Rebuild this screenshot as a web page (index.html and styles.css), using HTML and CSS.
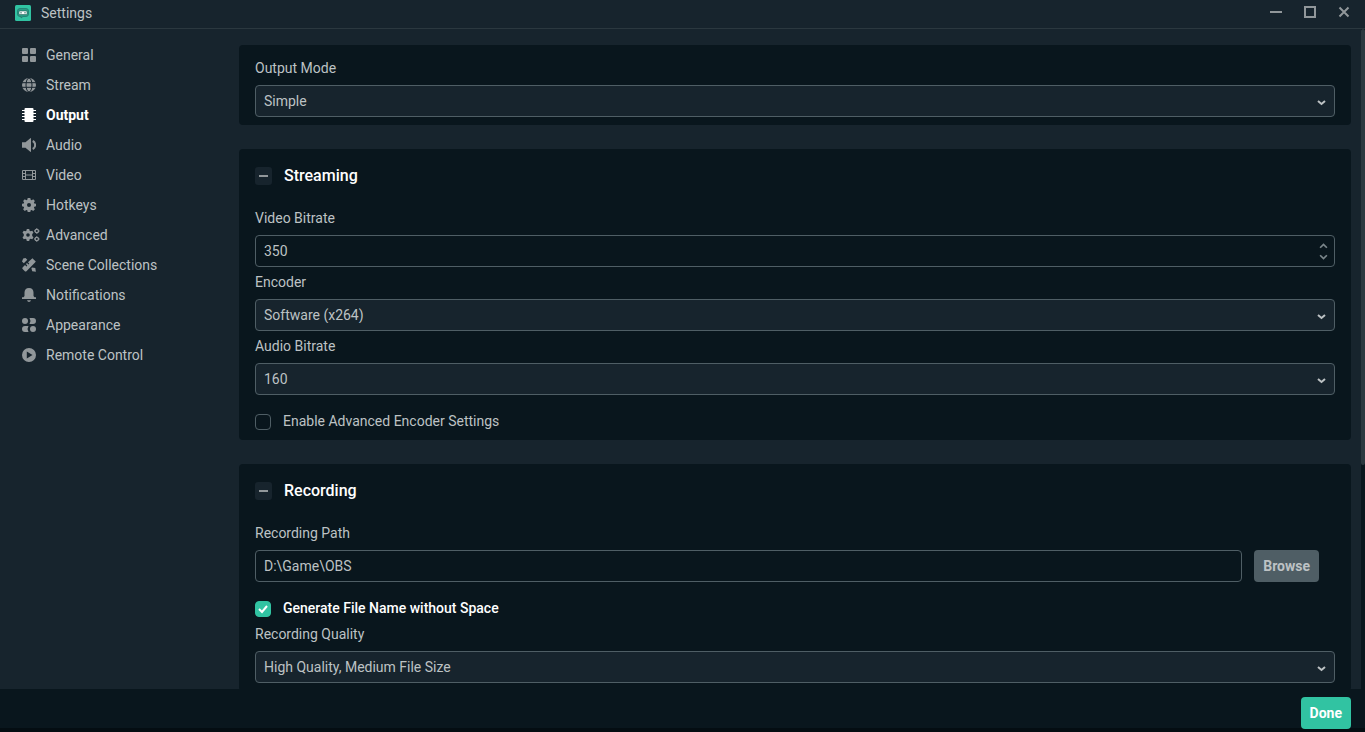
FILE: index.html
```
<!DOCTYPE html>
<html lang="en">
<head>
    <meta charset="UTF-8">
    <title>Settings</title>
    <link rel="stylesheet" href="styles.css">
</head>
<body>
<div class="window">
    <header class="titlebar">
        <svg class="logo" viewBox="0 0 16 16">
            <rect width="16" height="16" rx="1.5" fill="#31c3a2"/>
            <path d="M5 3.5h6a2.5 2.5 0 0 1 2.5 2.5v3a2.5 2.5 0 0 1-2.5 2.5H8l-2 1.5v-1.5H5A2.5 2.5 0 0 1 2.5 9V6A2.5 2.500 0 0 1 5 3.500z" fill="#2a9a84" stroke="#24786e" stroke-width=".8"/>
            <rect x="4" y="6" width="8" height="3.500" rx=".8" fill="#fff" stroke="#24665e" stroke-width=".6"/>
            <path d="M6 7v1.500M10 7v1.500" stroke="#24665e" stroke-width="1"/>
        </svg>
        <h1 class="title">Settings</h1>
        <div class="window-buttons">
            <button type="button" aria-label="Minimize"><svg viewBox="0 0 14 14"><path d="M1 7h12" stroke-width="2"/></svg></button>
            <button type="button" aria-label="Maximize"><svg viewBox="0 0 14 14"><path d="M2 2h10v10H2z" stroke-width="2"/></svg></button>
            <button type="button" aria-label="Close"><svg viewBox="0 0 14 14"><path d="M2.5 2.5l9 9M11.5 2.5l-9 9" stroke-width="2"/></svg></button>
        </div>
    </header>

    <div class="main">
        <nav class="nav">
            <a href="#" class="nav-item">
                <svg viewBox="0 0 14 14"><rect width="6" height="6" rx="1"/><rect x="8" width="6" height="6" rx="1"/><rect y="8" width="6" height="6" rx="1"/><rect x="8" y="8" width="6" height="6" rx="1"/></svg>
                General
            </a>
            <a href="#" class="nav-item">
                <svg viewBox="0 0 14 14"><circle cx="7" cy="7" r="7"/><g class="cut"><path d="M0 4.7h14M0 9.3h14"/><ellipse cx="7" cy="7" rx="3" ry="7"/></g></svg>
                Stream
            </a>
            <a href="#" class="nav-item active">
                <svg viewBox="0 0 14 14"><rect x="2.5" width="9" height="14" rx="1"/><path class="line" d="M0 2.5h14M0 5.5h14M0 8.5h14M0 11.5h14"/></svg>
                Output
            </a>
            <a href="#" class="nav-item">
                <svg viewBox="0 0 14 14"><path d="M0 4.3h3.5L8.300.2q.7-.4.7.6v12.400q0 1-.7.600L3.500 9.700H0z"/><path class="line thick" d="M10.700 3c3.300 1.500 3.300 6.500 0 8"/></svg>
                Audio
            </a>
            <a href="#" class="nav-item">
                <svg viewBox="0 0 14 14"><path class="line" d="M.5 2.5h13v9H.5zM3.5 2v10M10.5 2v10M3.5 7h7M0 5.500h3M0 8.500h3M11 5.500h3M11 8.500h3"/></svg>
                Video
            </a>
            <a href="#" class="nav-item">
                <svg viewBox="0 0 14 14"><path fill-rule="evenodd" d="M5.700 0h2.600l.4 1.800 1 .4 1.500-1 1.700 1.700-1 1.500.4 1 1.700.4v2.500l-1.700.4-.4 1 1 1.500-1.700 1.700-1.500-1-1 .4L8.300 14H5.700l-.4-1.700-1-.4-1.500 1-1.700-1.700 1-1.500-.4-1L0 8.300V5.800l1.700-.4.4-1-1-1.500 1.700-1.700 1.500 1 1-.4zM7 5a2 2 0 1 0 0 4 2 2 0 0 0 0-4z"/></svg>
                Hotkeys
            </a>
            <a href="#" class="nav-item">
                <svg class="wide" viewBox="0 0 18 14"><path fill-rule="evenodd" d="M4.800 1h2.400l.4 1.800 1 .5 1.700-.6L11.500 4.800l-1.300 1.300v1.800l1.300 1.300-1.200 2.100-1.700-.6-1 .5-.4 1.800H4.800l-.4-1.800-1-.5-1.700.6L.5 9.200l1.300-1.300V6.100L.5 4.800l1.200-2.100 1.700.6 1-.5zM6 5.200a1.800 1.800 0 1 0 0 3.600 1.800 1.800 0 0 0 0-3.600z"/><g class="line"><circle cx="14.800" cy="3" r="1.700" stroke-width="1.300"/><circle cx="14.800" cy="11" r="1.700" stroke-width="1.300"/><path d="M14.800.200v1M14.800 4.800v1M12 3h1M16.600 3h1M14.800 8.200v1M14.800 12.800v1M12 11h1M16.600 11h1"/></g></svg>
                Advanced
            </a>
            <a href="#" class="nav-item">
                <svg viewBox="0 0 14 14"><path d="M9.300 1.200 10.500.2l1.400 1.500L13.800 3.500l-1 1.300L4.700 13q-.8.700-1.600.5L.4 10.800Q0 10 .8 9.200L3 7l1.500 1.500.8-.8L4 6l1-1 1.500 1.500.8-.8L6 4.300z"/><path d="M1.200.5 3.500 0 5.300 1.800 1.800 5.300 0 3.500zM10 9.500l3.300.6.6 3.700-3.700-.5-.8-3z"/></svg>
                Scene Collections
            </a>
            <a href="#" class="nav-item">
                <svg viewBox="0 0 14 14"><path d="M7 0c3 0 4.500 2 4.500 4.500V8l1 1.200H14V11H0V9.200h1.500l1-1.200V4.500C2.500 2 4 0 7 0zM5 12.300h4Q8.500 14 7 14t-2-1.700z"/></svg>
                Notifications
            </a>
            <a href="#" class="nav-item">
                <svg viewBox="0 0 14 14"><circle cx="3" cy="3" r="3"/><path d="M7.500 0H11a3 3 0 0 1 0 6H7.500L8.500 3zM3 8h3.500l-1 3 1 3H3a3 3 0 0 1 0-6z"/><circle cx="11" cy="11" r="3"/></svg>
                Appearance
            </a>
            <a href="#" class="nav-item">
                <svg viewBox="0 0 14 14"><path fill-rule="evenodd" d="M7 0a7 7 0 1 0 0 14A7 7 0 0 0 7 0zM4.800 3.500v7L10.500 7z"/></svg>
                Remote Control
            </a>
        </nav>

        <form class="content" id="settings">
            <section class="section">
                <div class="field">
                    <label for="mode">Output Mode</label>
                    <div class="control">
                        <select id="mode"><option>Simple</option><option>Advanced</option></select>
                        <svg class="chevron" viewBox="0 0 9 7"><path d="M1 2l3.500 3L8 2"/></svg>
                    </div>
                </div>
            </section>

            <section class="section">
                <div class="section-head">
                    <button type="button" class="toggle" aria-label="Collapse Streaming"></button>
                    <h2>Streaming</h2>
                </div>
                <div class="field">
                    <label for="video-bitrate">Video Bitrate</label>
                    <div class="control">
                        <input type="number" id="video-bitrate" value="350">
                        <div class="spinner">
                            <button type="button" aria-label="Increase"><svg viewBox="0 0 8 6"><path d="M1 5l3-3 3 3"/></svg></button>
                            <button type="button" aria-label="Decrease"><svg viewBox="0 0 8 6"><path d="M1 1l3 3 3-3"/></svg></button>
                        </div>
                    </div>
                </div>
                <div class="field">
                    <label for="encoder">Encoder</label>
                    <div class="control">
                        <select id="encoder"><option>Software (x264)</option></select>
                        <svg class="chevron" viewBox="0 0 9 7"><path d="M1 2l3.500 3L8 2"/></svg>
                    </div>
                </div>
                <div class="field">
                    <label for="audio-bitrate">Audio Bitrate</label>
                    <div class="control">
                        <select id="audio-bitrate"><option>160</option></select>
                        <svg class="chevron" viewBox="0 0 9 7"><path d="M1 2l3.500 3L8 2"/></svg>
                    </div>
                </div>
                <div class="check">
                    <input type="checkbox" id="advanced">
                    <label for="advanced">Enable Advanced Encoder Settings</label>
                </div>
            </section>

            <section class="section">
                <div class="section-head">
                    <button type="button" class="toggle" aria-label="Collapse Recording"></button>
                    <h2>Recording</h2>
                </div>
                <div class="field">
                    <label for="path">Recording Path</label>
                    <div class="path-row">
                        <input type="text" id="path" value="D:\Game\OBS">
                        <button type="button" class="btn">Browse</button>
                    </div>
                </div>
                <div class="check">
                    <input type="checkbox" id="no-space" checked>
                    <label for="no-space">Generate File Name without Space</label>
                    <svg class="tick" viewBox="0 0 16 16"><path d="M4 8l3 3 5-6"/></svg>
                </div>
                <div class="field">
                    <label for="quality">Recording Quality</label>
                    <div class="control">
                        <select id="quality"><option>High Quality, Medium File Size</option></select>
                        <svg class="chevron" viewBox="0 0 9 7"><path d="M1 2l3.500 3L8 2"/></svg>
                    </div>
                </div>
            </section>
        </form>
        <div class="scrollbar"><div class="thumb"></div></div>
    </div>

    <footer class="footer">
        <button type="submit" form="settings" class="btn btn-done">Done</button>
    </footer>
</div>
</body>
</html>
```
FILE: styles.css
```
* {
    margin: 0;
    padding: 0;
    box-sizing: border-box;
}

body {
    background: #17242d;
    color: #bdc2c4;
    font: 14px/16px Roboto, "Liberation Sans", sans-serif;
}

button, input, select {
    font: inherit;
    color: inherit;
}

button {
    border: none;
    background: none;
    cursor: pointer;
}

.window {
    display: flex;
    flex-direction: column;
    height: 100vh;
    border-bottom: 4px solid #040d12;
}

/* title bar */
.titlebar {
    display: flex;
    align-items: center;
    flex: none;
    height: 29px;
    padding: 0 14px 2px 15px;
    border-bottom: 1px solid #2b383f;
}

.logo {
    width: 16px;
    height: 16px;
    margin-right: 10px;
}

.title {
    flex: 1;
    font-size: 14px;
    font-weight: 400;
}

.window-buttons {
    display: flex;
    gap: 20px;
    padding-bottom: 2px;
}

.window-buttons svg {
    display: block;
    width: 14px;
    height: 14px;
    fill: none;
    stroke: #91979a;
}

.main {
    display: flex;
    flex: 1;
    min-height: 0;
}

/* left menu */
.nav {
    flex: none;
    width: 239px;
    padding: 11px 0 0 22px;
}

.nav-item {
    display: flex;
    align-items: center;
    height: 30px;
    color: inherit;
    text-decoration: none;
}

.nav-item svg {
    width: 14px;
    height: 14px;
    margin-right: 10px;
    fill: #91979a;
    stroke: none;
}

.nav-item svg.wide {
    width: 18px;
    margin-right: 6px;
}

.nav-item .line {
    fill: none;
    stroke: #91979a;
}

.nav-item .thick {
    stroke-width: 2;
}

.nav-item .cut {
    fill: none;
    stroke: #17242d;
}

.nav-item.active {
    color: #fff;
    font-weight: 700;
}

.nav-item.active svg {
    fill: #fff;
}

.nav-item.active .line {
    stroke: #fff;
}

/* settings */
.content {
    flex: 1;
    min-width: 0;
    overflow: hidden;
    padding: 16px 10px 0 0;
}

.section {
    display: flow-root;
    margin-bottom: 24px;
    padding: 16px 16px 0;
    border-radius: 4px;
    background: #09161d;
}

.section-head {
    display: flex;
    align-items: center;
    height: 22px;
    margin-bottom: 24px;
}

.section-head h2 {
    font-size: 16px;
    font-weight: 500;
    color: #fff;
}

.toggle {
    display: flex;
    align-items: center;
    justify-content: center;
    width: 17px;
    height: 18px;
    margin-right: 12px;
    border-radius: 3px;
    background: #17242d;
}

.toggle::before {
    content: "";
    width: 9px;
    height: 2px;
    background: #91979a;
}

.field {
    padding-bottom: 8px;
}

.field label {
    display: block;
    margin-bottom: 10px;
    line-height: 14px;
}

.control {
    position: relative;
}

.field input,
.field select {
    display: block;
    width: 100%;
    height: 32px;
    padding: 0 8px;
    border: 1px solid #4f5e65;
    border-radius: 4px;
    background: #09161d;
    appearance: none;
}

.field select {
    background: #17242d;
}

input[type=number] {
    appearance: textfield;
}

input[type=number]::-webkit-inner-spin-button {
    display: none;
}

.chevron {
    position: absolute;
    top: 14px;
    right: 9px;
    width: 9px;
    height: 7px;
    fill: none;
    stroke: #bdc2c4;
    stroke-width: 2;
    pointer-events: none;
}

.spinner {
    position: absolute;
    top: 7px;
    right: 7px;
    display: flex;
    flex-direction: column;
    gap: 5px;
}

.spinner svg {
    display: block;
    width: 9px;
    height: 7px;
    fill: none;
    stroke: #7b868b;
    stroke-width: 1.5;
}

.path-row {
    display: flex;
    gap: 12px;
    padding-right: 16px;
}

.path-row input {
    flex: 1;
}

.btn {
    flex: none;
    height: 32px;
    padding: 0 9px;
    border-radius: 4px;
    background: #4f5e65;
    font-weight: 700;
}

.check {
    position: relative;
    display: flex;
    align-items: center;
    margin: 11px 0 10px;
}

.check label {
    padding-bottom: 2px;
    line-height: 14px;
}

.check input {
    width: 16px;
    height: 16px;
    margin-right: 12px;
    border: 1px solid #4f5e65;
    border-radius: 4px;
    appearance: none;
}

.check input:checked {
    border-color: #31c3a2;
    background: #31c3a2;
}

.check input:checked + label {
    color: #fff;
    font-weight: 500;
}

.tick {
    position: absolute;
    left: 0;
    width: 16px;
    height: 16px;
    fill: none;
    stroke: #fff;
    stroke-width: 2;
    pointer-events: none;
}

.scrollbar {
    flex: none;
    width: 4px;
    background: #09161d;
}

.thumb {
    height: 66%;
    border-radius: 2px;
    background: #2b383f;
}

.footer {
    display: flex;
    align-items: center;
    justify-content: flex-end;
    flex: none;
    height: 39px;
    padding: 9px 14px 0 0;
    background: #09161d;
}

.btn-done {
    background: #31c3a2;
    color: #fff;
}
```
